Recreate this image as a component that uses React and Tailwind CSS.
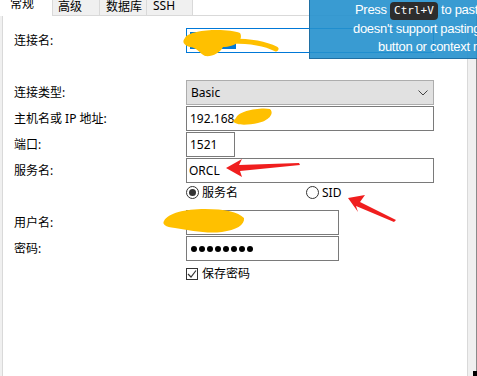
import React from "react";

function Label({ children }) {
  return <div className="w-[172px] shrink-0 leading-[14px]">{children}</div>;
}

function Row({ label, className = "", children }) {
  return (
    <div className={`flex items-center ${className}`}>
      <Label>{label}</Label>
      {children}
    </div>
  );
}

export default function App() {
  return (
    <div className="relative w-[477px] h-[376px] overflow-hidden bg-white text-black font-['Noto_Sans','Noto_Sans_CJK_SC',sans-serif] text-[12px]">
      <div className="flex flex-col h-full">
        {/* Tab bar */}
        <div className="flex h-[16px] shrink-0">
          <div className="w-[53px] h-[16px] bg-white border-r border-[#d9d9d9] pl-[10px] leading-[12px] font-['Noto_Sans_CJK_SC',sans-serif] overflow-hidden">
            <div className="-mt-[3px]">常规</div>
          </div>
          <div className="w-[47px] h-[16px] bg-[#f0f0f0] border-r border-b border-[#d9d9d9] pl-[5px] leading-[12px] font-['Noto_Sans_CJK_SC',sans-serif]">
            高级
          </div>
          <div className="w-[47px] h-[16px] bg-[#f0f0f0] border-r border-b border-[#d9d9d9] pl-[6px] leading-[12px] font-['Noto_Sans_CJK_SC',sans-serif]">
            数据库
          </div>
          <div className="w-[46px] h-[16px] bg-[#f0f0f0] border-r border-b border-[#d9d9d9] pl-[6px] leading-[12px]">
            SSH
          </div>
          <div className="flex-1 h-[16px] bg-white border-b border-[#d9d9d9]"></div>
        </div>

        {/* Body */}
        <div className="flex flex-1">
          <div className="w-[2px] bg-[#f0f0f0]"></div>
          <div className="w-[466px] border-l border-r border-[#d9d9d9] pl-[11px] pt-[12px] flex flex-col">
            <Row label="连接名:">
              <div className="w-[248px] h-[25px] border border-[#0078d7] flex items-center pl-[3px]">
                <span className="inline-block w-[46px] h-[17px] bg-[#0078d7] text-white leading-[17px] overflow-hidden">
                  &nbsp;
                </span>
              </div>
            </Row>

            <Row label="连接类型:" className="mt-[27px]">
              <div className="w-[248px] h-[25px] border border-[#adadad] bg-[#e1e1e1] flex items-center justify-between pl-[4px] pr-[5px]">
                <span>Basic</span>
                <svg width="10" height="6" viewBox="0 0 10 6">
                  <path d="M0.5 0.5 L5 5 L9.5 0.5" fill="none" stroke="#444" strokeWidth="1" />
                </svg>
              </div>
            </Row>

            <Row label="主机名或 IP 地址:" className="mt-[1px]">
              <div className="w-[248px] h-[25px] border border-[#7a7a7a] flex items-center pl-[3px]">
                192.168
              </div>
            </Row>

            <Row label="端口:" className="mt-[1px]">
              <div className="w-[49px] h-[25px] border border-[#7a7a7a] flex items-center pl-[3px]">
                1521
              </div>
            </Row>

            <Row label="服务名:" className="mt-[1px]">
              <div className="w-[248px] h-[25px] border border-[#7a7a7a] flex items-center pl-[2px]">
                ORCL
              </div>
            </Row>

            <Row label="" className="mt-[1px] h-[17px]">
              <div className="flex items-center">
                <span className="w-[13px] h-[13px] rounded-full border border-[#333] flex items-center justify-center">
                  <span className="w-[7px] h-[7px] rounded-full bg-[#333]"></span>
                </span>
                <span className="ml-[3px] w-[104px]">服务名</span>
                <span className="w-[13px] h-[13px] rounded-full border border-[#333]"></span>
                <span className="ml-[3px]">SID</span>
              </div>
            </Row>

            <Row label="用户名:" className="mt-[9px]">
              <div className="w-[153px] h-[25px] border border-[#7a7a7a]"></div>
            </Row>

            <Row label="密码:" className="mt-[1px]">
              <div className="w-[153px] h-[25px] border border-[#7a7a7a] flex items-center pl-[4px] gap-[2px]">
                {[0, 1, 2, 3, 4, 5, 6, 7].map((i) => (
                  <span key={i} className="w-[6px] h-[6px] rounded-full bg-black"></span>
                ))}
              </div>
            </Row>

            <Row label="" className="mt-[7px] h-[12px]">
              <div className="flex items-center">
                <span className="w-[12px] h-[12px] border border-[#333] flex items-center justify-center">
                  <svg width="10" height="10" viewBox="0 0 10 10">
                    <path d="M1 5 L4 8 L9 1.5" fill="none" stroke="#333" strokeWidth="1.2" />
                  </svg>
                </span>
                <span className="ml-[4px]">保存密码</span>
              </div>
            </Row>
          </div>
          <div className="w-[8px] bg-[#f0f0f0]"></div>
          <div className="w-[1px] bg-[#8a8a8a]"></div>
        </div>
      </div>

      {/* Scribbles and arrows overlay */}
      <svg className="absolute left-0 top-0 pointer-events-none" width="477" height="376" viewBox="0 0 477 376">
        <g fill="#ffc000">
          <path d="M185 38 C189 29, 228 28, 240 33 C244 40, 235 47, 223 47 C220 53, 212 57, 205 56 C199 53, 198 48, 190 47 C183 45, 182 41, 185 38 Z" />
          <path d="M236 118 C238 111, 260 107, 270 109 C275 114, 268 121, 258 123 C248 125, 236 126, 233 121 Z" />
          <path d="M164 221 C168 213, 185 209, 205 209 C225 209, 238 212, 244 218 C245 225, 236 230, 222 232 C205 234, 190 230, 175 228 C165 227, 162 224, 164 221 Z" />
        </g>
        <path d="M232 41 C250 41, 266 44, 276 49" fill="none" stroke="#ffc000" strokeWidth="5" strokeLinecap="round" />
        <g fill="#f01e1e">
          <path d="M226 168 L242 159 L239 165 L299 163 L300 165 L240 171 L242 177 Z" />
          <path d="M348 198 L365 195 L360 202 L396 220 L394 222 L356 206 L358 212 Z" />
        </g>
      </svg>

      {/* Tooltip */}
      <div className="absolute left-[309px] top-0 w-[260px] h-[59px] bg-[#2490cd]/90 border-l border-b border-[#1f6fa3] text-white text-[13px] tracking-[-0.3px] leading-[18px] pt-[1px] font-['Liberation_Sans',sans-serif] whitespace-nowrap">
        <div className="ml-[45px]">
          Press{" "}
          <span className="inline-block bg-[#2d2d2d] rounded-[4px] px-[4px] text-[11px] tracking-normal leading-[18px] font-['DejaVu_Sans_Mono',monospace]">
            Ctrl+V
          </span>{" "}
          to paste.
        </div>
        <div className="ml-[43px]">doesn't support pasting with the toolbar</div>
        <div className="ml-[68px]">button or context menu.</div>
      </div>

      <div className="absolute right-0 bottom-0 w-[4px] h-[5px] bg-black"></div>
    </div>
  );
}
